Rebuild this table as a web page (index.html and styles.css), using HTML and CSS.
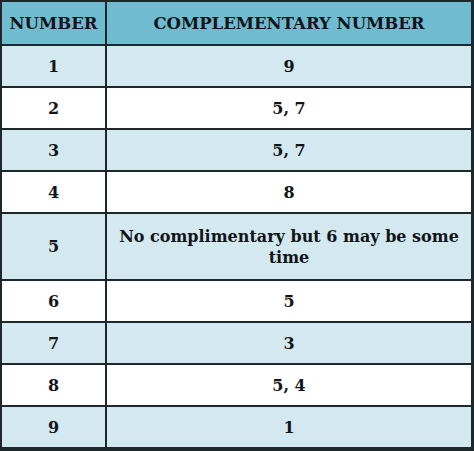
FILE: index.html
```html
<!DOCTYPE html>
<html>
<head>
<meta charset="utf-8">
<link rel="stylesheet" href="styles.css">
</head>
<body>
<div class="table">
  <div class="cell head">NUMBER</div>
  <div class="cell head">COMPLEMENTARY NUMBER</div>
  <div class="cell alt">1</div><div class="cell alt">9</div>
  <div class="cell">2</div><div class="cell">5, 7</div>
  <div class="cell alt">3</div><div class="cell alt">5, 7</div>
  <div class="cell">4</div><div class="cell">8</div>
  <div class="cell alt">5</div><div class="cell alt">No complimentary but 6 may be some time</div>
  <div class="cell">6</div><div class="cell">5</div>
  <div class="cell alt">7</div><div class="cell alt">3</div>
  <div class="cell">8</div><div class="cell">5, 4</div>
  <div class="cell alt">9</div><div class="cell alt">1</div>
</div>
</body>
</html>
```
FILE: styles.css
```css
html, body {
  margin: 0;
  padding: 0;
  background: #ffffff;
}
.table {
  width: 474px;
  height: 451px;
  box-sizing: border-box;
  background: #1e272b;
  padding: 2px 3px 4px 2px;
  display: grid;
  grid-template-columns: 103px 1fr;
  grid-template-rows: 42px 40px 40px 40px 40px 65px 40px 40px 40px 40px;
  gap: 2px;
  font-family: "DejaVu Serif", "Liberation Serif", serif;
  font-weight: bold;
  color: #111518;
}
.cell {
  background: #ffffff;
  display: flex;
  align-items: center;
  justify-content: center;
  text-align: center;
  font-size: 16px;
  line-height: 21px;
  padding: 0 6px;
}
.alt {
  background: #d3e8ef;
}
.head {
  background: #6fbcd0;
  font-size: 16.5px;
  padding: 0 1px;
  white-space: nowrap;
}
```
